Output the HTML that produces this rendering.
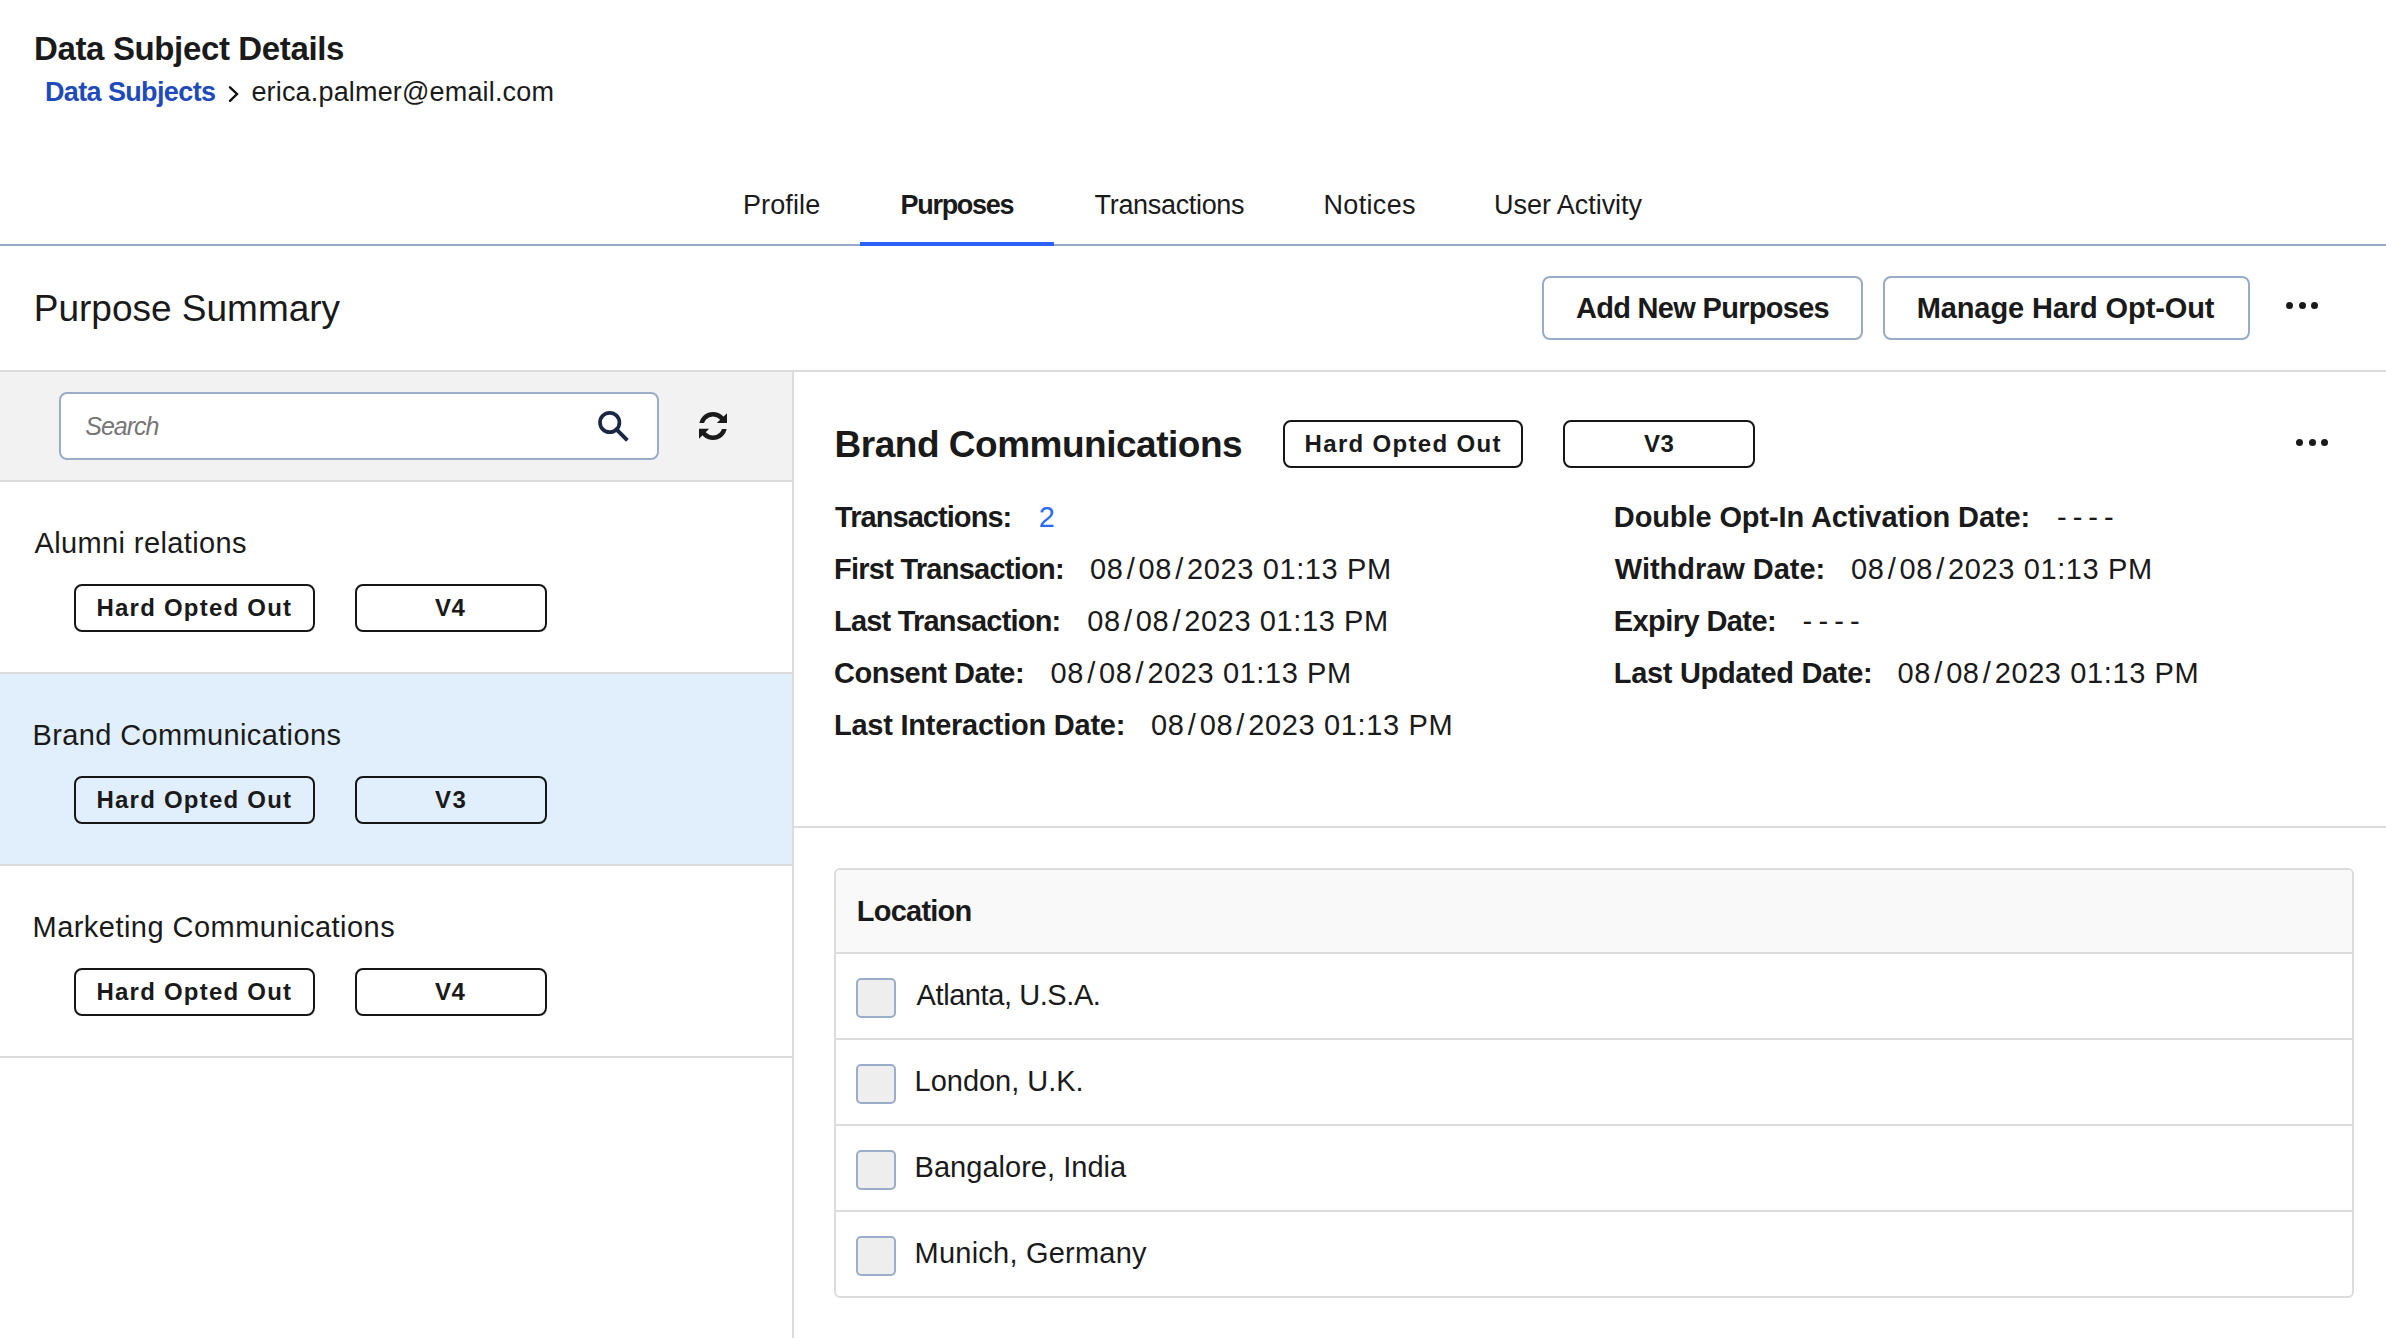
<!DOCTYPE html>
<html><head><meta charset="utf-8">
<style>
html,body{margin:0;padding:0;}
body{width:2386px;height:1338px;position:relative;overflow:hidden;background:#fff;font-family:"Liberation Sans",sans-serif;color:#1a1a1a;}
.b{position:absolute;box-sizing:border-box;}
.t{position:absolute;white-space:pre;}
.badge{position:absolute;box-sizing:border-box;height:48px;border:2px solid #161616;border-radius:8px;}
.cb{position:absolute;box-sizing:border-box;width:40px;height:40px;border:2px solid #9aaec8;border-radius:5px;background:#eeeeee;left:856px;}
.dot{position:absolute;width:7px;height:7px;border-radius:50%;background:#1a1a1a;}
</style></head><body>
<!-- tabs border -->
<div class="b" style="left:0;top:244px;width:2386px;height:2px;background:#98abc4"></div>
<div class="b" style="left:860px;top:242px;width:194px;height:4px;background:#2962f5"></div>
<!-- breadcrumb chevron -->
<svg class="b" style="left:226px;top:84px" width="16" height="20" viewBox="0 0 16 20"><polyline points="4,3.3 11,10 4,16.8" fill="none" stroke="#111" stroke-width="2.4" stroke-linecap="round"/></svg>
<!-- buttons -->
<div class="b" style="left:1542px;top:276px;width:321px;height:64px;border:2px solid #99acc6;border-radius:8px"></div>
<div class="b" style="left:1883px;top:276px;width:367px;height:64px;border:2px solid #99acc6;border-radius:8px"></div>
<div class="dot" style="left:2286px;top:302px"></div>
<div class="dot" style="left:2298.5px;top:302px"></div>
<div class="dot" style="left:2311px;top:302px"></div>
<!-- summary bottom line -->
<div class="b" style="left:0;top:370px;width:2386px;height:2px;background:#dcdcdc"></div>
<!-- left search bar -->
<div class="b" style="left:0;top:372px;width:792px;height:108px;background:#f2f2f2"></div>
<div class="b" style="left:0;top:480px;width:792px;height:2px;background:#dcdcdc"></div>
<div class="b" style="left:59px;top:392px;width:600px;height:68px;border:2px solid #9aadc8;border-radius:8px;background:#fff"></div>
<svg class="b" style="left:590px;top:400px" width="50" height="50" viewBox="590 400 50 50">
 <circle cx="609.7" cy="422.5" r="9.7" fill="none" stroke="#1b2845" stroke-width="3.7"/>
 <line x1="616.5" y1="429.5" x2="626" y2="439" stroke="#1b2845" stroke-width="3.9" stroke-linecap="square"/>
</svg>
<svg class="b" style="left:699px;top:412px" width="28" height="28" viewBox="0 0 28 28">
 <defs>
  <clipPath id="ct"><rect x="0" y="0" width="28" height="11"/></clipPath>
  <clipPath id="cbm"><rect x="0" y="17" width="28" height="11"/></clipPath>
 </defs>
 <circle cx="14" cy="14" r="11.7" fill="none" stroke="#1a1a1a" stroke-width="4.6" clip-path="url(#ct)"/>
 <circle cx="14" cy="14" r="11.7" fill="none" stroke="#1a1a1a" stroke-width="4.6" clip-path="url(#cbm)"/>
 <polygon points="28,1.2 28,11 17.8,11" fill="#1a1a1a"/>
 <polygon points="0,16.8 10.2,16.8 0,26.8" fill="#1a1a1a"/>
</svg>
<!-- left vertical divider -->
<div class="b" style="left:792px;top:372px;width:2px;height:966px;background:#dcdcdc"></div>
<!-- list rows -->
<div class="b" style="left:0;top:672px;width:792px;height:2px;background:#dcdcdc"></div>
<div class="b" style="left:0;top:674px;width:792px;height:190px;background:#e1effd"></div>
<div class="b" style="left:0;top:864px;width:792px;height:2px;background:#dcdcdc"></div>
<div class="b" style="left:0;top:1056px;width:792px;height:2px;background:#dcdcdc"></div>
<div class="badge" style="left:74px;top:584px;width:241px"></div>
<div class="badge" style="left:355px;top:584px;width:192px"></div>
<div class="badge" style="left:74px;top:776px;width:241px"></div>
<div class="badge" style="left:355px;top:776px;width:192px"></div>
<div class="badge" style="left:74px;top:968px;width:241px"></div>
<div class="badge" style="left:355px;top:968px;width:192px"></div>
<!-- details badges -->
<div class="badge" style="left:1283px;top:420px;width:240px;height:48px"></div>
<div class="badge" style="left:1563px;top:420px;width:192px;height:48px"></div>
<div class="dot" style="left:2296px;top:438.5px"></div>
<div class="dot" style="left:2308.5px;top:438.5px"></div>
<div class="dot" style="left:2321px;top:438.5px"></div>
<div class="b" style="left:794px;top:826px;width:1592px;height:2px;background:#dcdcdc"></div>
<!-- table -->
<div class="b" style="left:834px;top:868px;width:1520px;height:430px;border:2px solid #dcdcdc;border-radius:6px;overflow:hidden">
  <div class="b" style="left:0;top:0;width:1516px;height:84px;background:#f9f9f9"></div>
  <div class="b" style="left:0;top:82px;width:1516px;height:2px;background:#dcdcdc"></div>
  <div class="b" style="left:0;top:168px;width:1516px;height:2px;background:#dcdcdc"></div>
  <div class="b" style="left:0;top:254px;width:1516px;height:2px;background:#dcdcdc"></div>
  <div class="b" style="left:0;top:340px;width:1516px;height:2px;background:#dcdcdc"></div>
</div>
<div class="cb" style="top:978px"></div>
<div class="cb" style="top:1064px"></div>
<div class="cb" style="top:1150px"></div>
<div class="cb" style="top:1236px"></div>
<div class="t" style="left:34.00px;top:32px;font-size:33px;line-height:33px;font-weight:700;letter-spacing:-0.364px;">Data Subject Details</div>
<div class="t" style="left:45.00px;top:79px;font-size:27px;line-height:27px;font-weight:700;color:#1e4bb9;letter-spacing:-0.629px;">Data Subjects</div>
<div class="t" style="left:251.40px;top:79px;font-size:27px;line-height:27px;letter-spacing:0.171px;">erica.palmer@email.com</div>
<div class="t" style="left:743.00px;top:192px;font-size:27px;line-height:27px;letter-spacing:0.114px;">Profile</div>
<div class="t" style="left:900.50px;top:192px;font-size:27px;line-height:27px;font-weight:700;letter-spacing:-1.289px;">Purposes</div>
<div class="t" style="left:1094.60px;top:192px;font-size:27px;line-height:27px;letter-spacing:-0.333px;">Transactions</div>
<div class="t" style="left:1323.50px;top:192px;font-size:27px;line-height:27px;letter-spacing:0.328px;">Notices</div>
<div class="t" style="left:1494.00px;top:192px;font-size:27px;line-height:27px;letter-spacing:-0.043px;">User Activity</div>
<div class="t" style="left:33.80px;top:290px;font-size:37px;line-height:37px;letter-spacing:-0.006px;">Purpose Summary</div>
<div class="t" style="left:1576.00px;top:294px;font-size:29px;line-height:29px;font-weight:700;letter-spacing:-0.703px;">Add New Purposes</div>
<div class="t" style="left:1916.70px;top:294px;font-size:29px;line-height:29px;font-weight:700;letter-spacing:-0.106px;">Manage Hard Opt-Out</div>
<div class="t" style="left:85.30px;top:414px;font-size:25px;line-height:25px;color:#767676;font-style:italic;letter-spacing:-1.002px;">Search</div>
<div class="t" style="left:34.50px;top:529px;font-size:29px;line-height:29px;letter-spacing:0.379px;">Alumni relations</div>
<div class="t" style="left:96.50px;top:596px;font-size:24px;line-height:24px;font-weight:700;letter-spacing:1.218px;">Hard Opted Out</div>
<div class="t" style="left:434.90px;top:596px;font-size:24px;line-height:24px;font-weight:700;letter-spacing:0.492px;">V4</div>
<div class="t" style="left:32.50px;top:721px;font-size:29px;line-height:29px;letter-spacing:0.368px;">Brand Communications</div>
<div class="t" style="left:96.50px;top:788px;font-size:24px;line-height:24px;font-weight:700;letter-spacing:1.218px;">Hard Opted Out</div>
<div class="t" style="left:434.90px;top:788px;font-size:24px;line-height:24px;font-weight:700;letter-spacing:1.492px;">V3</div>
<div class="t" style="left:32.50px;top:913px;font-size:29px;line-height:29px;letter-spacing:0.471px;">Marketing Communications</div>
<div class="t" style="left:96.50px;top:980px;font-size:24px;line-height:24px;font-weight:700;letter-spacing:1.218px;">Hard Opted Out</div>
<div class="t" style="left:434.90px;top:980px;font-size:24px;line-height:24px;font-weight:700;letter-spacing:0.492px;">V4</div>
<div class="t" style="left:834.60px;top:426px;font-size:37px;line-height:37px;font-weight:700;letter-spacing:-0.491px;">Brand Communications</div>
<div class="t" style="left:1304.60px;top:432px;font-size:24px;line-height:24px;font-weight:700;letter-spacing:1.325px;">Hard Opted Out</div>
<div class="t" style="left:1644.00px;top:432px;font-size:24px;line-height:24px;font-weight:700;letter-spacing:0.392px;">V3</div>
<div class="t" style="left:835.00px;top:503px;font-size:29px;line-height:29px;font-weight:700;letter-spacing:-0.942px;">Transactions:</div>
<div class="t" style="left:1038.70px;top:503px;font-size:29px;line-height:29px;color:#2b6cf5;">2</div>
<div class="t" style="left:834.00px;top:555px;font-size:29px;line-height:29px;font-weight:700;letter-spacing:-0.745px;">First Transaction:</div>
<div class="t" style="left:1090.00px;top:555px;font-size:29px;line-height:29px;letter-spacing:0.613px;">08<span style="margin:0 3.2px">/</span>08<span style="margin:0 3.2px">/</span>2023 01:13 PM</div>
<div class="t" style="left:834.00px;top:607px;font-size:29px;line-height:29px;font-weight:700;letter-spacing:-0.804px;">Last Transaction:</div>
<div class="t" style="left:1087.30px;top:607px;font-size:29px;line-height:29px;letter-spacing:0.596px;">08<span style="margin:0 3.2px">/</span>08<span style="margin:0 3.2px">/</span>2023 01:13 PM</div>
<div class="t" style="left:834.00px;top:659px;font-size:29px;line-height:29px;font-weight:700;letter-spacing:-0.493px;">Consent Date:</div>
<div class="t" style="left:1050.50px;top:659px;font-size:29px;line-height:29px;letter-spacing:0.585px;">08<span style="margin:0 3.2px">/</span>08<span style="margin:0 3.2px">/</span>2023 01:13 PM</div>
<div class="t" style="left:834.00px;top:711px;font-size:29px;line-height:29px;font-weight:700;letter-spacing:-0.245px;">Last Interaction Date:</div>
<div class="t" style="left:1151.00px;top:711px;font-size:29px;line-height:29px;letter-spacing:0.641px;">08<span style="margin:0 3.2px">/</span>08<span style="margin:0 3.2px">/</span>2023 01:13 PM</div>
<div class="t" style="left:1613.80px;top:503px;font-size:29px;line-height:29px;font-weight:700;letter-spacing:-0.105px;">Double Opt-In Activation Date:</div>
<div class="t" style="left:2057.00px;top:503px;font-size:29px;line-height:29px;letter-spacing:-1.024px;">- - - -</div>
<div class="t" style="left:1614.80px;top:555px;font-size:29px;line-height:29px;font-weight:700;letter-spacing:-0.027px;">Withdraw Date:</div>
<div class="t" style="left:1851.00px;top:555px;font-size:29px;line-height:29px;letter-spacing:0.613px;">08<span style="margin:0 3.2px">/</span>08<span style="margin:0 3.2px">/</span>2023 01:13 PM</div>
<div class="t" style="left:1613.80px;top:607px;font-size:29px;line-height:29px;font-weight:700;letter-spacing:-0.579px;">Expiry Date:</div>
<div class="t" style="left:1802.60px;top:607px;font-size:29px;line-height:29px;letter-spacing:-0.957px;">- - - -</div>
<div class="t" style="left:1613.80px;top:659px;font-size:29px;line-height:29px;font-weight:700;letter-spacing:-0.318px;">Last Updated Date:</div>
<div class="t" style="left:1897.60px;top:659px;font-size:29px;line-height:29px;letter-spacing:0.607px;">08<span style="margin:0 3.2px">/</span>08<span style="margin:0 3.2px">/</span>2023 01:13 PM</div>
<div class="t" style="left:856.70px;top:897px;font-size:29px;line-height:29px;font-weight:700;letter-spacing:-0.745px;">Location</div>
<div class="t" style="left:916.60px;top:981px;font-size:29px;line-height:29px;letter-spacing:-0.424px;">Atlanta, U.S.A.</div>
<div class="t" style="left:914.60px;top:1067px;font-size:29px;line-height:29px;letter-spacing:-0.030px;">London, U.K.</div>
<div class="t" style="left:914.60px;top:1153px;font-size:29px;line-height:29px;letter-spacing:0.021px;">Bangalore, India</div>
<div class="t" style="left:914.60px;top:1239px;font-size:29px;line-height:29px;letter-spacing:0.217px;">Munich, Germany</div>
</body></html>
